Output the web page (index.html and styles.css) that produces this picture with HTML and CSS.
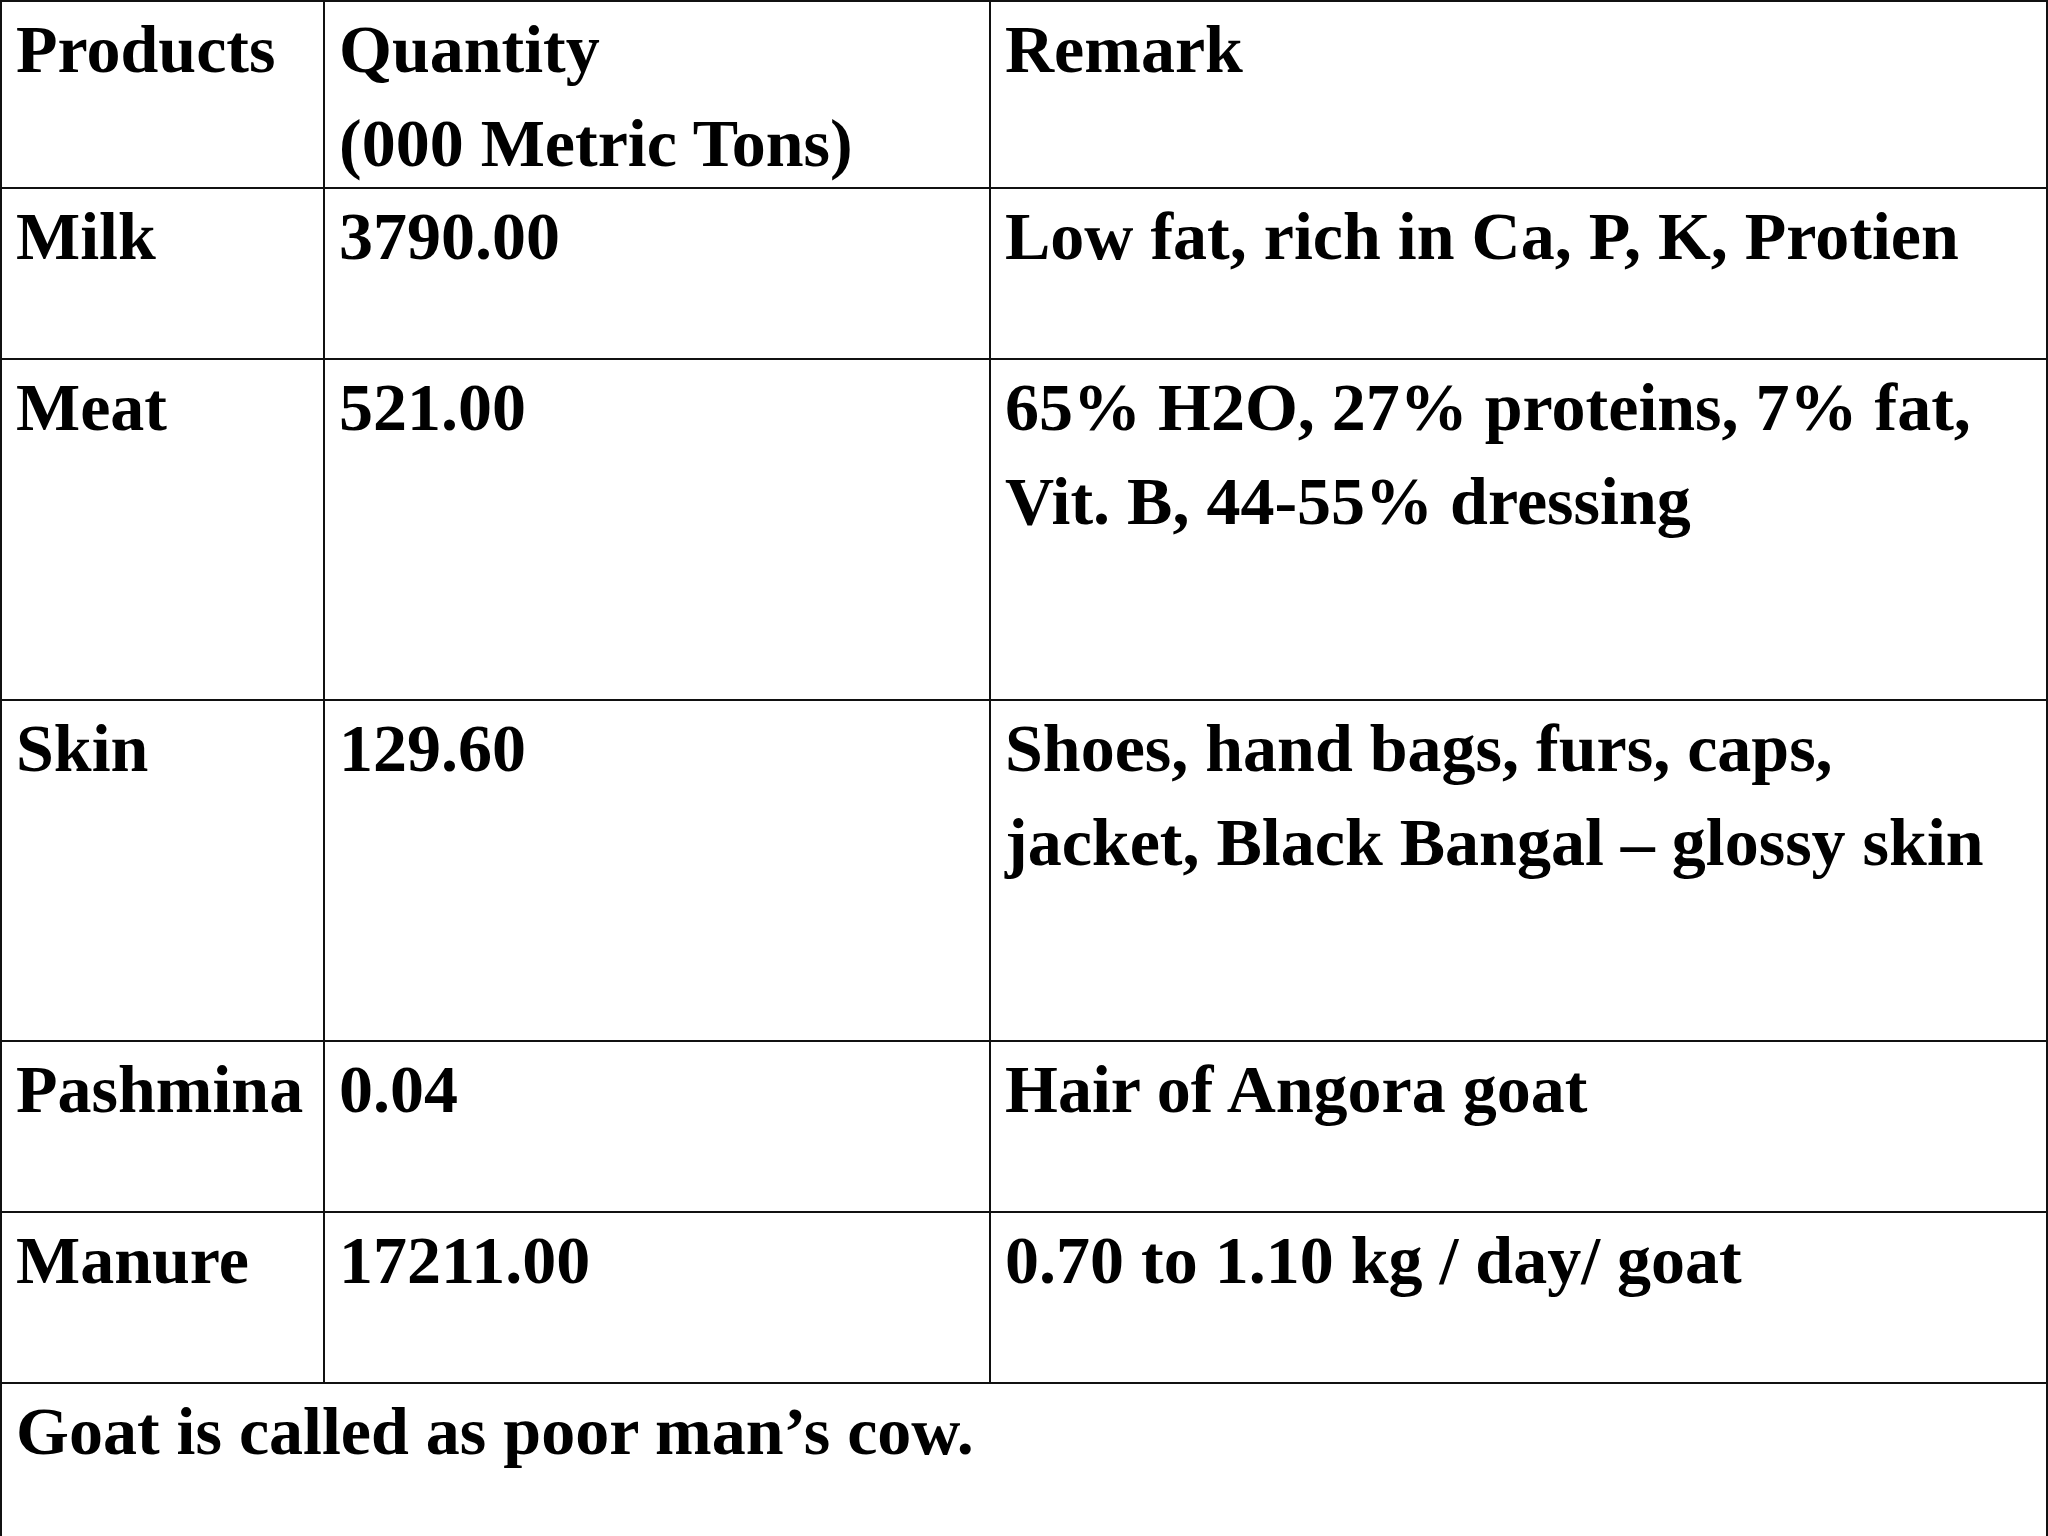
FILE: index.html
```html
<!DOCTYPE html>
<html lang="en">
<head>
<meta charset="utf-8">
<title>Goat products</title>
<link rel="stylesheet" href="styles.css">
</head>
<body>
<div class="table">
  <div class="cell r-head">Products</div>
  <div class="cell r-head">Quantity<br>(000 Metric Tons)</div>
  <div class="cell r-head">Remark</div>

  <div class="cell r-one">Milk</div>
  <div class="cell r-one">3790.00</div>
  <div class="cell r-one">Low fat, rich in Ca, P, K, Protien</div>

  <div class="cell r-meat">Meat</div>
  <div class="cell r-meat">521.00</div>
  <div class="cell r-meat">65% H2O, 27% proteins, 7% fat, Vit. B, 44-55% dressing</div>

  <div class="cell r-skin">Skin</div>
  <div class="cell r-skin">129.60</div>
  <div class="cell r-skin">Shoes, hand bags, furs, caps, jacket, Black Bangal – glossy skin</div>

  <div class="cell r-one">Pashmina</div>
  <div class="cell r-one">0.04</div>
  <div class="cell r-one">Hair of Angora goat</div>

  <div class="cell r-one">Manure</div>
  <div class="cell r-one">17211.00</div>
  <div class="cell r-one">0.70 to 1.10 kg / day/ goat</div>

  <div class="cell r-foot span-all">Goat is called as poor man’s cow.</div>
</div>
</body>
</html>
```
FILE: styles.css
```css
html, body {
  margin: 0;
  padding: 0;
  background: #ffffff;
}

body {
  width: 2048px;
  height: 1536px;
  overflow: hidden;
}

.table {
  display: grid;
  grid-template-columns: 323px 666px 1057px;
  border-left: 2px solid #111;
  border-top: 2px solid #111;
  font-family: "Liberation Serif", "Times New Roman", serif;
  font-weight: bold;
  font-size: 68px;
  line-height: 94px;
  color: #000;
}

.cell {
  border-right: 2px solid #111;
  border-bottom: 2px solid #111;
  padding: 0 4px 0 14px;
  box-sizing: border-box;
  white-space: normal;
}

.r-skin:last-child,
.r-meat:nth-child(9),
.r-skin:nth-child(12) {
  padding-right: 30px;
}

.r-head { height: 187px; }
.r-one { height: 171px; }
.r-meat { height: 341px; }
.r-skin { height: 341px; }
.r-foot { height: 220px; }

.span-all {
  grid-column: 1 / -1;
}
```
